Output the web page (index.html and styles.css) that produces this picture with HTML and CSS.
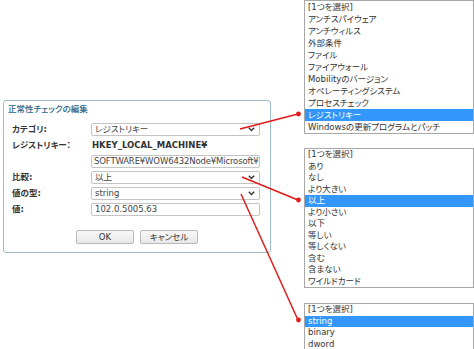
FILE: index.html
```html
<!DOCTYPE html>
<html lang="ja">
<head>
  <meta charset="UTF-8">
  <title>正常性チェックの編集</title>
  <link rel="stylesheet" href="styles.css">
</head>
<body>
  <div class="page">

    <!-- DIALOG -->
    <div class="left">
      <div class="dialog">
        <div class="dialog-title">正常性チェックの編集</div>
        <div class="form">
          <label>カテゴリ:</label>
          <div class="select">レジストリキー
            <svg class="chevron" width="7" height="5" viewBox="0 0 7 5"><path d="M0.8 0.8 L3.5 3.6 L6.2 0.8" fill="none" stroke="#333" stroke-width="1.4"/></svg>
          </div>

          <label>レジストリキー：</label>
          <div class="static">HKEY_LOCAL_MACHINE¥</div>

          <span></span>
          <div class="input tight">SOFTWARE¥WOW6432Node¥Microsoft¥</div>

          <label>比較:</label>
          <div class="select">以上
            <svg class="chevron" width="7" height="5" viewBox="0 0 7 5"><path d="M0.8 0.8 L3.5 3.6 L6.2 0.8" fill="none" stroke="#333" stroke-width="1.4"/></svg>
          </div>

          <label>値の型:</label>
          <div class="select">string
            <svg class="chevron" width="7" height="5" viewBox="0 0 7 5"><path d="M0.8 0.8 L3.5 3.6 L6.2 0.8" fill="none" stroke="#333" stroke-width="1.4"/></svg>
          </div>

          <label>値:</label>
          <div class="input">102.0.5005.63</div>
        </div>
        <div class="buttons">
          <button>OK</button>
          <button>キャンセル</button>
        </div>
      </div>
    </div>

    <!-- OPEN DROPDOWNS -->
    <div class="right">
      <ul class="listbox tall">
        <li>[1つを選択]</li>
        <li>アンチスパイウェア</li>
        <li>アンチウィルス</li>
        <li>外部条件</li>
        <li>ファイル</li>
        <li>ファイアウォール</li>
        <li>Mobilityのバージョン</li>
        <li>オペレーティングシステム</li>
        <li>プロセスチェック</li>
        <li class="selected">レジストリキー</li>
        <li>Windowsの更新プログラムとパッチ</li>
      </ul>

      <ul class="listbox">
        <li>[1つを選択]</li>
        <li>あり</li>
        <li>なし</li>
        <li>より大きい</li>
        <li class="selected">以上</li>
        <li>より小さい</li>
        <li>以下</li>
        <li>等しい</li>
        <li>等しくない</li>
        <li>含む</li>
        <li>含まない</li>
        <li>ワイルドカード</li>
      </ul>

      <ul class="listbox last">
        <li>[1つを選択]</li>
        <li class="selected">string</li>
        <li>binary</li>
        <li>dword</li>
      </ul>
    </div>

    <!-- callout arrows -->
    <svg class="arrows" width="474" height="349" viewBox="0 0 474 349">
      <g stroke="#e01b1b" stroke-width="1.5" fill="#e01b1b">
        <line x1="240" y1="129" x2="298" y2="114"/>
        <circle cx="298.5" cy="114" r="2.4" stroke="none"/>
        <line x1="242" y1="177" x2="298" y2="200"/>
        <circle cx="298.5" cy="200" r="2.4" stroke="none"/>
        <line x1="241" y1="194" x2="298" y2="320"/>
        <circle cx="298.5" cy="320" r="2.4" stroke="none"/>
      </g>
    </svg>
  </div>
</body>
</html>
```

FILE: styles.css
```css
body {
  margin: 0;
  background: #fff;
  color: #333;
  font-family: "DejaVu Sans", "Noto Sans CJK JP", sans-serif;
  font-size: 8.5px;
  font-feature-settings: "palt";
}

.page {
  position: relative;
  display: flex;
  width: 474px;
  height: 349px;
  overflow: hidden;
}

/* --- DIALOG --- */
.left {
  width: 271px;
  padding: 100px 0 0 3px;
  box-sizing: border-box;
  flex-shrink: 0;
}

.dialog {
  box-sizing: border-box;
  width: 268px;
  border: 1px solid #9dbdcd;
  border-radius: 3px;
  padding: 3px 10px 8px 4px;
}

.dialog-title {
  line-height: 11px;
  color: #22648a;
  font-weight: 500;
}

.form {
  display: grid;
  grid-template-columns: 79px 169px;
  grid-auto-rows: 13px;
  row-gap: 3px;
  margin-top: 8px;
  padding-left: 4px;
}

.form label {
  font-weight: bold;
  line-height: 13px;
  color: #333;
}

.static {
  font-weight: bold;
  line-height: 13px;
  color: #333;
  padding-left: 1px;
}

.select,
.input {
  box-sizing: border-box;
  height: 13px;
  border: 1px solid #c4c4c4;
  border-radius: 2px;
  padding: 0 3px;
  line-height: 11px;
  color: #444;
  white-space: nowrap;
  overflow: hidden;
}

.input.tight {
  padding: 0 1px 0 2px;
  letter-spacing: -0.15px;
}

.select {
  display: flex;
  justify-content: space-between;
  align-items: center;
}

.chevron {
  flex-shrink: 0;
  margin-right: 1px;
}

.buttons {
  display: flex;
  justify-content: center;
  gap: 6px;
  margin-top: 14px;
  padding-left: 6px;
}

.buttons button {
  width: 58px;
  height: 14px;
  padding: 0;
  border: 1px solid #b9b9b9;
  border-radius: 2px;
  background: linear-gradient(#f7f7f7, #e8e8e8);
  font-family: inherit;
  font-size: 8.5px;
  font-feature-settings: "palt";
  color: #333;
  line-height: 12px;
}

/* --- LISTBOXES --- */
.right {
  display: flex;
  flex-direction: column;
  gap: 14px;
  margin-left: 33px;
  width: 170px;
  flex-shrink: 0;
}

.listbox {
  list-style: none;
  margin: 0;
  padding: 0;
  box-sizing: border-box;
  width: 170px;
  border: 1px solid #a8a8a8;
  color: #333;
}

.listbox li {
  padding-left: 3px;
  line-height: 11.5px;
  white-space: nowrap;
}

.listbox.tall li {
  line-height: 12px;
}

.listbox.last {
  margin-top: 1px;
}

.listbox li.selected {
  background: #3396fb;
  color: #fff;
}

.arrows {
  position: absolute;
  left: 0;
  top: 0;
  pointer-events: none;
}
```
